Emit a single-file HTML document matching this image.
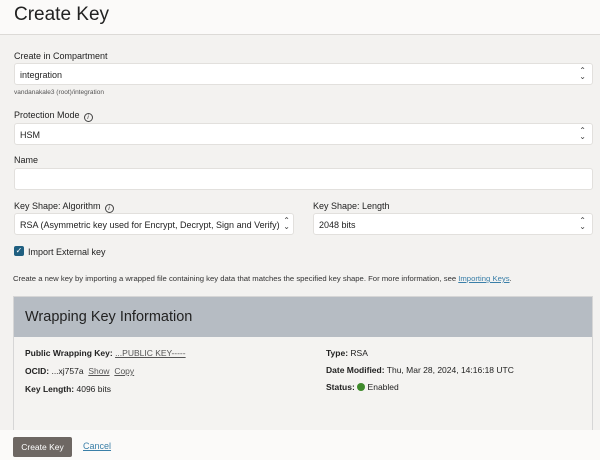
<!DOCTYPE html>
<html><head><style>
*{box-sizing:border-box;margin:0;padding:0}
body{width:600px;height:460px;overflow:hidden;background:#f3f2f0;font-family:"Liberation Sans",sans-serif;color:#161513;position:relative}
.hdr{position:absolute;left:0;top:0;width:600px;height:35px;background:#fbfaf9;border-bottom:1px solid #dcdad7}
.hdr h1{position:absolute;left:14px;top:4px;font-size:19px;font-weight:normal;color:#222}
.lbl{position:absolute;font-size:9px;color:#222}
.inp{position:absolute;height:22px;background:#fff;border:1px solid #e2e0dd;border-radius:3px;font-size:9px;padding:6px 5px;color:#222}
.arr{position:absolute;right:6px;top:4px;font-size:8px;line-height:6px;color:#444;text-align:center}
.info{display:inline-block;width:9px;height:9px;border:1px solid #444;border-radius:50%;font-size:6px;text-align:center;line-height:8px;margin-left:4px;vertical-align:-1px;font-style:italic}
.small{position:absolute;font-size:6.5px;color:#555}
.panel{position:absolute;left:13px;top:296px;width:580px;height:140px;background:#f4f3f1;border:1px solid #d6d6d6}
.ph{height:40px;background:#b6bcc3;font-size:14.5px;padding:12px 0 0 11px;color:#222}
.kv{position:absolute;font-size:8.5px;color:#222}
.kv b{font-weight:bold}
.u{text-decoration:underline;color:#555}
.ftr{position:absolute;left:0;top:430px;width:600px;height:30px;background:#fbfaf9}
.btn{position:absolute;left:13px;top:7px;width:59px;height:20px;background:#6e6763;color:#fff;font-size:8.5px;border-radius:2px;text-align:center;line-height:20px}
</style></head><body>
<div class="hdr"><h1>Create Key</h1></div>
<div class="lbl" style="left:14px;top:51px">Create in Compartment</div>
<div class="inp" style="left:14px;top:63px;width:579px">integration<div class="arr">⌃<br>⌄</div></div>
<div class="small" style="left:14px;top:89px">vandanakale3 (root)/integration</div>
<div class="lbl" style="left:14px;top:110px">Protection Mode<span class="info">i</span></div>
<div class="inp" style="left:14px;top:123px;width:579px">HSM<div class="arr">⌃<br>⌄</div></div>
<div class="lbl" style="left:14px;top:155px">Name</div>
<div class="inp" style="left:14px;top:168px;width:579px"></div>
<div class="lbl" style="left:14px;top:201px">Key Shape: Algorithm<span class="info">i</span></div>
<div class="inp" style="left:14px;top:213px;width:280px">RSA (Asymmetric key used for Encrypt, Decrypt, Sign and Verify)<div class="arr" style="right:3px">⌃<br>⌄</div></div>
<div class="lbl" style="left:313px;top:201px">Key Shape: Length</div>
<div class="inp" style="left:313px;top:213px;width:280px">2048 bits<div class="arr">⌃<br>⌄</div></div>
<div style="position:absolute;left:14px;top:246px;width:10px;height:10px;background:#1f5f80;border-radius:2px;color:#fff;font-size:8px;line-height:10px;text-align:center">✓</div>
<div class="lbl" style="left:28px;top:247px">Import External key</div>
<div class="small" style="left:13px;top:274px;color:#333;font-size:7.7px">Create a new key by importing a wrapped file containing key data that matches the specified key shape. For more information, see <span style="text-decoration:underline;color:#3a7fa8">Importing Keys</span>.</div>
<div class="panel">
<div class="ph">Wrapping Key Information</div>
<div class="kv" style="left:11px;top:51px"><b>Public Wrapping Key:</b> <span class="u">...PUBLIC KEY-----</span></div>
<div class="kv" style="left:11px;top:69px"><b>OCID:</b> ...xj757a &nbsp;<span class="u">Show</span> &nbsp;<span class="u">Copy</span></div>
<div class="kv" style="left:11px;top:87px"><b>Key Length:</b> 4096 bits</div>
<div class="kv" style="left:312px;top:51px"><b>Type:</b> RSA</div>
<div class="kv" style="left:312px;top:68px"><b>Date Modified:</b> Thu, Mar 28, 2024, 14:16:18 UTC</div>
<div class="kv" style="left:312px;top:85px"><b>Status:</b> <span style="display:inline-block;width:8px;height:8px;border-radius:50%;background:#3f8a2c;vertical-align:-1px"></span> Enabled</div>
</div>
<div class="ftr"><div class="btn">Create Key</div><div style="position:absolute;left:83px;top:11px;font-size:9px;color:#3a7fa8;text-decoration:underline">Cancel</div></div>
</body></html>
